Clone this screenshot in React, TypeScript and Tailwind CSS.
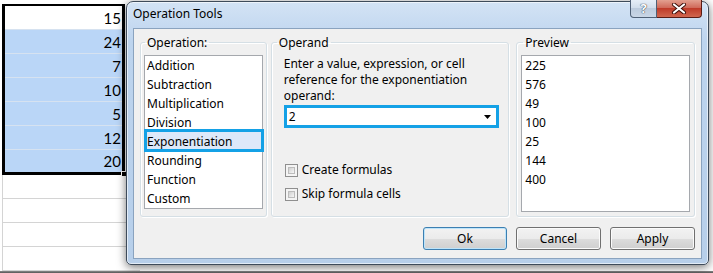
import React from "react";

const cells = [15, 24, 7, 10, 5, 12, 20];
const operations = [
  "Addition",
  "Subtraction",
  "Multiplication",
  "Division",
  "Exponentiation",
  "Rounding",
  "Function",
  "Custom",
];
const preview = [225, 576, 49, 100, 25, 144, 400];

function Sheet() {
  return (
    <div className="flex flex-col w-[140px] pt-[4px] font-['Lato',sans-serif] text-[15px] text-black">
      <div className="relative ml-[2px] w-[123px] border-black border-t-2 border-x-[3px] border-b-[3px]">
        {cells.map((v, i) => (
          <div
            key={i}
            className={
              "flex items-end justify-end pr-[1px] " +
              (i === cells.length - 1 ? "h-[22px] " : "h-[24px] border-b border-[#d6e2f0] ") +
              (i === 0 ? "bg-white" : "bg-[#bad6f7]")
            }
          >
            <span className="leading-[21px]">{v}</span>
          </div>
        ))}
        <span className="absolute -right-[5px] -bottom-[5px] w-[6px] h-[6px] bg-black border border-white" />
      </div>
      {[0, 1, 2, 3].map((r) => (
        <div key={r} className="h-[24px] ml-[2px] border-l border-b border-[#d4d4d4]" />
      ))}
    </div>
  );
}

function Button({ label, primary }: { label: string; primary?: boolean }) {
  return (
    <button
      className={
        "h-[23px] rounded-[3px] border text-[12px] text-black bg-[linear-gradient(#f2f2f2,#ebebeb_50%,#dddddd_50%,#cfcfcf)] " +
        (primary
          ? "w-[84px] border-[#3c7fb1] shadow-[inset_0_0_0_1px_#bde4fa]"
          : "w-[85px] border-[#707070] shadow-[inset_0_0_0_1px_#fbfbfb]")
      }
    >
      {label}
    </button>
  );
}

function Checkbox({ label }: { label: string }) {
  return (
    <label className="flex items-center h-[16px] gap-[4px]">
      <span className="w-[13px] h-[13px] border border-[#8f8f8f] bg-[#f4f4f4] p-[2px]">
        <span className="block w-full h-full border border-[#bcbcbc] bg-[linear-gradient(135deg,#cfcfcf,#f7f7f7)]" />
      </span>
      <span>{label}</span>
    </label>
  );
}

const groupBox =
  "h-[182px] rounded-[3px] border border-[#d5dfe5] shadow-[inset_1px_1px_0_#fff,1px_1px_0_#fff]";

function Dialog() {
  return (
    <div className="absolute left-[126px] top-[1px] w-[583px] h-[264px] flex flex-col px-[6px] pb-[5px] rounded-t-[7px] rounded-b-[5px] border border-[#3e4b5a] bg-[linear-gradient(180deg,#d3e3f5,#bdd4ee_40px,#b7cfea)] shadow-[0_2px_10px_rgba(0,0,0,0.55),inset_0_0_0_1px_rgba(255,255,255,0.6)] font-['Noto_Sans',sans-serif] text-[12px] text-black">
      <div className="h-[26px] flex items-start">
        <span className="mt-[3px]">Operation Tools</span>
        <div className="ml-auto flex -mt-[2px]">
          <div className="w-[27px] h-[18px] flex items-center justify-center rounded-bl-[4px] border border-t-0 border-[#4f6076] bg-[linear-gradient(#e6eef7,#d2deec_45%,#bccbdd_50%,#c9d6e6)] text-white font-bold text-[13px] leading-none [text-shadow:0_0_1px_#2a3440,0_0_1px_#2a3440]">
            ?
          </div>
          <div className="w-[45px] h-[18px] flex items-center justify-center rounded-br-[4px] border border-l-0 border-t-0 border-[#5a1c14] bg-[linear-gradient(#e3a090,#d06a5a_45%,#bf3b29_50%,#d0664f)]">
            <svg width="16" height="11" viewBox="0 0 16 11">
              <path d="M3 1.5 L13 9.5 M13 1.5 L3 9.5" stroke="#3b0d08" strokeWidth="4" strokeLinecap="round" />
              <path d="M3 1.5 L13 9.5 M13 1.5 L3 9.5" stroke="#ffffff" strokeWidth="2.2" strokeLinecap="round" />
            </svg>
          </div>
        </div>
      </div>

      <div className="flex-1 flex flex-col bg-[#f0f0f0] border border-[#8aa3bf] pt-[6px] pl-[6px] pr-[6px]">
        <div className="flex">
          <fieldset className={groupBox + " w-[127px]"}>
            <legend className="ml-[4px] px-[2px] leading-[15px]">Operation:</legend>
            <div className="mt-[5px] mx-[3px] h-[154px] border border-[#a5a8ad] bg-white">
              {operations.map((op) => (
                <div
                  key={op}
                  className={
                    "relative h-[19px] leading-[19px] pl-[2px] " +
                    (op === "Exponentiation" ? "bg-[#dde8f9]" : "")
                  }
                >
                  {op === "Exponentiation" && (
                    <span className="absolute -left-[1px] -right-[2px] -top-[3px] -bottom-[1px] border-[3px] border-[#14a1e6]" />
                  )}
                  <span className="relative">{op}</span>
                </div>
              ))}
            </div>
          </fieldset>

          <fieldset className={groupBox + " w-[239px] ml-[4px]"}>
            <legend className="ml-[5px] px-[2px] leading-[15px]">Operand</legend>
            <div className="pl-[12px] pt-[6px]">
              <p className="leading-[16px]">
                Enter a value, expression, or cell
                <br />
                reference for the exponentiation
                <br />
                operand:
              </p>
              <div className="mt-[1px] w-[215px] h-[23px] flex items-center border-[3px] border-[#14a1e6] bg-white pl-[2px] pr-[5px]">
                <span>2</span>
                <svg className="ml-auto" width="7" height="4" viewBox="0 0 7 4">
                  <path d="M0 0 H7 L3.5 4 Z" fill="#000" />
                </svg>
              </div>
              <div className="mt-[34px] flex flex-col gap-[8px] pl-[1px]">
                <Checkbox label="Create formulas" />
                <Checkbox label="Skip formula cells" />
              </div>
            </div>
          </fieldset>

          <fieldset className={groupBox + " w-[179px] ml-[7px]"}>
            <legend className="ml-[6px] px-[2px] leading-[15px]">Preview</legend>
            <div className="mt-[5px] ml-[4px] w-[169px] h-[157px] border border-[#a5a8ad] bg-white">
              {preview.map((v) => (
                <div key={v} className="h-[19px] leading-[19px] pl-[3px]">
                  {v}
                </div>
              ))}
            </div>
          </fieldset>
        </div>

        <div className="mt-[10px] flex justify-end gap-[9px]">
          <Button label="Ok" primary />
          <Button label="Cancel" />
          <Button label="Apply" />
        </div>
      </div>
    </div>
  );
}

export default function App() {
  return (
    <div className="relative w-[713px] h-[273px] overflow-hidden bg-white flex flex-col">
      <Sheet />
      <div className="mt-auto h-[5px] bg-[linear-gradient(#8a8a8a,#555)]" />
      <Dialog />
    </div>
  );
}
